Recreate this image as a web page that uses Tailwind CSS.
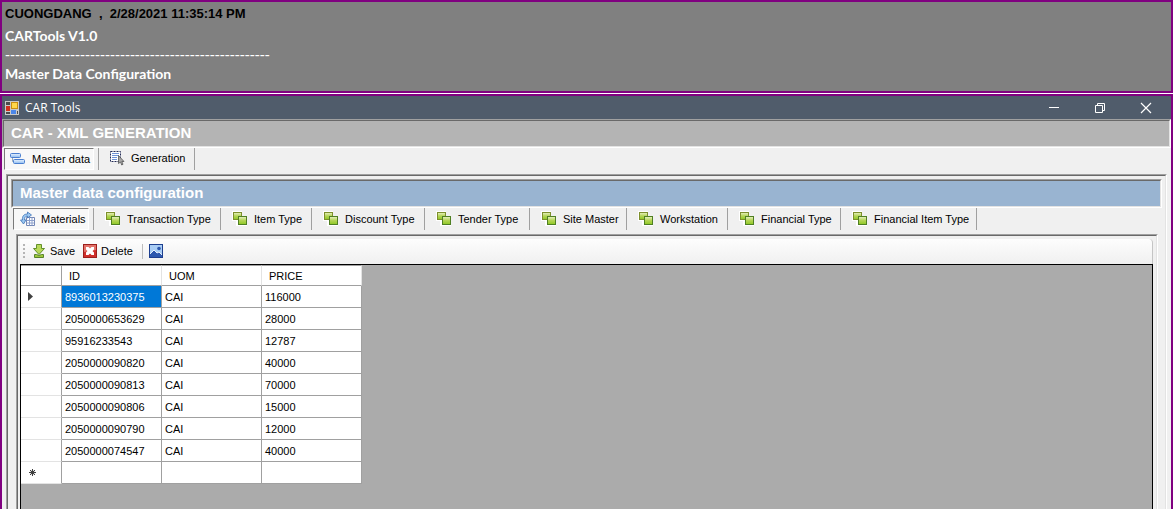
<!DOCTYPE html>
<html lang="en">
<head>
    <meta charset="UTF-8">
    <meta name="viewport" content="width=device-width, initial-scale=1.0">
    <title>CAR Tools</title>
    <script src="https://cdn.jsdelivr.net/npm/@tailwindcss/browser@4"></script>
</head>
<body class="h-screen overflow-hidden flex flex-col gap-px bg-white text-black text-[11px] leading-4 font-['Liberation_Sans',sans-serif]">
    <!-- shared icons -->
    <svg class="absolute size-0">
        <linearGradient id="leaf" x1="0" y1="0" x2="0" y2="1">
            <stop offset="0" stop-color="#e9f2c4"/>
            <stop offset=".5" stop-color="#b4d455"/>
            <stop offset="1" stop-color="#8cc822"/>
        </linearGradient>
        <linearGradient id="sky" x1="0" y1="0" x2="0" y2="1">
            <stop offset="0" stop-color="#eaf4ff"/>
            <stop offset="1" stop-color="#8fbcf0"/>
        </linearGradient>
        <symbol id="blocks" viewBox="0 0 16 16">
            <path d="M0 0h10v5h5v10H4v-5H0z" fill="#fff"/>
            <rect x="1.500" y="1.500" width="8" height="7" fill="url(#leaf)" stroke="#7d8f2c"/>
            <rect x="6.500" y="5.500" width="8" height="8" fill="url(#leaf)" stroke="#4f7f23"/>
        </symbol>
    </svg>

    <header class="shrink-0 border-2 border-[#800080] bg-[#808080] px-[3px] pt-0.5 pb-[7px] text-sm leading-5 text-white font-bold font-['Lato',sans-serif]">
        <p class="text-[13px] text-black whitespace-pre font-['Liberation_Sans',sans-serif]">CUONGDANG  ,  2/28/2021 11:35:14 PM</p>
        <h1 class="pt-0.5">CARTools V1.0</h1>
        <p class="text-[15px] leading-[18px] font-normal font-['Liberation_Sans',sans-serif]">-----------------------------------------------------</p>
        <h2>Master Data Configuration</h2>
    </header>

    <main class="grow min-h-0 flex flex-col border-2 border-b-0 border-[#800080] bg-[#f0f0f0]">
        <!-- title bar -->
        <div class="shrink-0 h-[23px] flex items-center bg-[#505c6b] pl-[3px] pr-0.5 text-white text-xs font-['Open_Sans',sans-serif]">
            <svg class="size-[14px] mr-[6px]" viewBox="0 0 14 14">
                <rect width="14" height="14" fill="#c9c9c9"/>
                <path d="M1 1h4v3H1zM1 11h4v2H1zM12 10h1v3h-1z" fill="#4b4b4b"/>
                <rect x="6.500" y="1.500" width="6" height="6" fill="#ffd84a" stroke="#c98f10"/>
                <rect x="1" y="5" width="4" height="5" fill="#d2301c"/>
                <rect x="6" y="9" width="5" height="4" fill="#4b86e8"/>
            </svg>
            <span class="grow">CAR Tools</span>
            <button class="w-[46px] h-full flex items-center justify-center" aria-label="Minimize">
                <svg class="size-3" viewBox="0 0 12 12"><path d="M1 5.500h10" stroke="#fff"/></svg>
            </button>
            <button class="w-[46px] h-full flex items-center justify-center" aria-label="Restore">
                <svg class="size-3" viewBox="0 0 12 12" fill="none" stroke="#fff"><path d="M1.500 3.500h7v7h-7zM3.500 3V1.500h7v7H9"/></svg>
            </button>
            <button class="w-[46px] h-full flex items-center justify-center" aria-label="Close">
                <svg class="size-3" viewBox="0 0 12 12"><path d="M1 1l10 10M11 1L1 11" stroke="#fff" stroke-width="1.200"/></svg>
            </button>
        </div>

        <div class="shrink-0 border border-t-[#a0a0a0] border-l-[#a0a0a0] border-r-white border-b-white">
            <h2 class="border border-t-[#696969] border-l-[#696969] border-r-[#e3e3e3] border-b-[#e3e3e3] bg-[#b4b4b4] pl-[7px] pb-0.5 text-[15px] leading-[23px] font-bold text-white">CAR - XML GENERATION</h2>
        </div>

        <nav class="shrink-0 h-[22px] flex pl-0.5">
            <button class="w-[90px] flex items-center border border-[#7a7a7a] border-r-white border-b-white bg-[#f8f8f8] pl-[5px] gap-[6px] whitespace-nowrap">
                <svg class="size-4 shrink-0" viewBox="0 0 16 16" fill="url(#sky)" stroke="#4a7fd0">
                    <rect x=".5" y="2.500" width="10" height="4" rx="1"/>
                    <rect x="3.500" y="8.500" width="11" height="4" rx="1"/>
                    <path d="M2.500 7v3.500H3" fill="none" stroke="#9ab"/>
                </svg>
                Master data
            </button>
            <button class="ml-1 w-[97px] flex items-center border-x border-[#a0a0a0] pl-[10px] pb-0.5 gap-[6px] whitespace-nowrap">
                <svg class="size-4 shrink-0" viewBox="0 0 16 16">
                    <rect x="1.500" y="1.500" width="10" height="10" fill="#fff" stroke="#222a55" stroke-dasharray="2 1"/>
                    <path d="M3 3.500h7M3 5.500h7M3 7.500h5M3 9.500h5" stroke="#6f93d6"/>
                    <path d="M9.500 5.500v8l2-1.500 1.200 3 1.300-.7-1.200-2.800h2.200z" fill="#a8a8a8" stroke="#555" stroke-width=".8"/>
                </svg>
                Generation
            </button>
        </nav>

        <!-- master data panel -->
        <section class="grow min-h-0 flex flex-col mt-1 ml-1 mr-1 border border-b-0 border-t-[#a0a0a0] border-l-[#a0a0a0] border-r-white">
            <div class="grow min-h-0 flex flex-col border border-b-0 border-t-[#696969] border-l-[#696969] border-r-[#e3e3e3] p-[3px] pb-0">
                <div class="shrink-0 border border-t-[#a0a0a0] border-l-[#a0a0a0] border-r-white border-b-white">
                    <h2 class="border border-t-[#696969] border-l-[#696969] border-r-[#e3e3e3] border-b-[#e3e3e3] bg-[#99b4d1] pl-[7px] pb-0.5 text-[15px] leading-[23px] font-bold text-white">Master data configuration</h2>
                </div>

                <nav class="shrink-0 h-[22px] flex pl-0.5">
                    <button class="w-[76px] shrink-0 flex items-center border border-[#7a7a7a] border-r-white border-b-white bg-[#f8f8f8] pl-[6px] gap-[5px] whitespace-nowrap">
                        <svg class="size-4 shrink-0" viewBox="0 0 16 16">
                            <path d="M6.500 6.500h8v8h-8z" fill="#fff" stroke="#7286b5"/>
                            <path d="M6.500 9.500h8M6.500 12h8M9.500 6.500v8M12 6.500v8" stroke="#8da0cb"/>
                            <path d="M2.500 9C2 5 4 3 7.500 3V1l4 3-4 3V5C5 5 4.500 7 4.500 9H6l-2.500 4L.5 9z" fill="#9cc8f2" stroke="#3c72b8" stroke-width=".8"/>
                        </svg>
                        Materials
                    </button>
                    <button class="ml-1 w-[128px] shrink-0 flex items-center border-x border-[#a0a0a0] pl-[11px] gap-[6px] whitespace-nowrap"><svg class="size-4 shrink-0"><use href="#blocks"/></svg>Transaction Type</button>
                    <button class="w-[91px] shrink-0 flex items-center border-r border-[#a0a0a0] pl-[11px] gap-[6px] whitespace-nowrap"><svg class="size-4 shrink-0"><use href="#blocks"/></svg>Item Type</button>
                    <button class="w-[113px] shrink-0 flex items-center border-r border-[#a0a0a0] pl-[11px] gap-[6px] whitespace-nowrap"><svg class="size-4 shrink-0"><use href="#blocks"/></svg>Discount Type</button>
                    <button class="w-[105px] shrink-0 flex items-center border-r border-[#a0a0a0] pl-[11px] gap-[6px] whitespace-nowrap"><svg class="size-4 shrink-0"><use href="#blocks"/></svg>Tender Type</button>
                    <button class="w-[97px] shrink-0 flex items-center border-r border-[#a0a0a0] pl-[11px] gap-[6px] whitespace-nowrap"><svg class="size-4 shrink-0"><use href="#blocks"/></svg>Site Master</button>
                    <button class="w-[101px] shrink-0 flex items-center border-r border-[#a0a0a0] pl-[11px] gap-[6px] whitespace-nowrap"><svg class="size-4 shrink-0"><use href="#blocks"/></svg>Workstation</button>
                    <button class="w-[113px] shrink-0 flex items-center border-r border-[#a0a0a0] pl-[11px] gap-[6px] whitespace-nowrap"><svg class="size-4 shrink-0"><use href="#blocks"/></svg>Financial Type</button>
                    <button class="w-[136px] shrink-0 flex items-center border-r border-[#a0a0a0] pl-[11px] gap-[6px] whitespace-nowrap"><svg class="size-4 shrink-0"><use href="#blocks"/></svg>Financial Item Type</button>
                </nav>

                <!-- materials panel -->
                <div class="grow min-h-0 flex flex-col mt-1 ml-[5px] mr-1 border border-b-0 border-t-[#a0a0a0] border-l-[#a0a0a0] border-r-white">
                    <div class="grow min-h-0 flex flex-col border border-b-0 border-t-[#696969] border-l-[#696969] border-r-[#e3e3e3] px-[3px] pt-[3px] pl-0.5">
                        <div class="shrink-0 h-[25px] flex items-center rounded-tr border-r border-[#c4c4c4] bg-linear-to-b from-[#fdfdfd] to-[#f0f0f0] pl-[3px] pb-px">
                            <svg class="w-0.5 h-[15px] mr-1.5" viewBox="0 0 2 15"><path d="M0 0h2v2H0zM0 4h2v2H0zM0 8h2v2H0zM0 12h2v2H0z" fill="#b5b5b5"/></svg>
                            <button class="flex items-center gap-[3px] mr-[7px]">
                                <svg class="size-4" viewBox="0 0 16 16">
                                    <path d="M5.500 1.500h5v4h3L8 11.500 2.500 5.500h3z" fill="#b8d958" stroke="#63902a"/>
                                    <path d="M3.500 11.500h2l2.500 1 2.500-1h2v3h-9z" fill="#9cc83b" stroke="#58832a"/>
                                </svg>
                                Save
                            </button>
                            <button class="flex items-center gap-[3px] mr-[9px]">
                                <svg class="size-4" viewBox="0 0 16 16">
                                    <rect x="1.500" y="1.500" width="13" height="13" fill="#cf2f2b" stroke="#9c1f1c"/>
                                    <path d="M2 2h12v5L2 9z" fill="#e2726a"/>
                                    <path d="M4 4h2.500L8 5.500 9.500 4H12v2.500L10.500 8 12 9.500V12H9.500L8 10.500 6.500 12H4V9.500L5.500 8 4 6.500z" fill="#fff"/>
                                </svg>
                                Delete
                            </button>
                            <span class="w-px h-[15px] bg-[#bdbdbd] mr-[5px]"></span>
                            <button aria-label="Picture">
                                <svg class="size-4" viewBox="0 0 16 16">
                                    <rect x="1.500" y="1.500" width="13" height="13" fill="#a9cdf5" stroke="#1d3f8f"/>
                                    <path d="M2 14v-3l4-4 3 3 2-1 3 3v2z" fill="#2c57ae"/>
                                    <path d="M2 11l4-4 3 3 2-1 3 3" fill="none" stroke="#e8f1fc"/>
                                    <circle cx="11" cy="5.500" r="1.800" fill="#2c57ae"/>
                                </svg>
                            </button>
                        </div>
                        <div class="grow min-h-0 border border-b-0 border-black bg-[#ababab]">
                            <table class="table-fixed w-[341px] border-separate border-spacing-0 bg-white text-left [&_td]:border-r [&_td]:border-b [&_td]:border-[#a0a0a0] [&_td]:pl-[3px] [&_td]:h-[22px] [&_td]:py-0 [&_tbody_th]:border-r [&_tbody_th]:border-r-[#a0a0a0] [&_tbody_th]:border-b [&_tbody_th]:border-b-[#e3e3e3]">
                                <colgroup><col class="w-[41px]"><col class="w-[100px]"><col class="w-[100px]"><col class="w-[100px]"></colgroup>
                                <thead>
                                    <tr class="h-[21px] [&>*]:border-b [&>*]:border-b-[#a0a0a0] [&>*]:border-t [&>*]:border-t-[#a0a0a0]">
                                        <th class="border-r border-r-[#a0a0a0]" aria-label="Row"></th>
                                        <th class="font-normal pl-[7px] border-r border-r-[#e3e3e3]">ID</th>
                                        <th class="font-normal pl-[7px] border-r border-r-[#e3e3e3]">UOM</th>
                                        <th class="font-normal pl-[7px] border-r border-r-[#e3e3e3]">PRICE</th>
                                    </tr>
                                </thead>
                                <tbody>
                                    <tr><th scope="row"><svg class="w-[5px] h-[9px] ml-[7px]" viewBox="0 0 5 9"><path d="M0 0l5 4.500L0 9z" fill="#404040"/></svg></th><td class="bg-[#0078d7] text-white">8936013230375</td><td>CAI</td><td>116000</td></tr>
                                    <tr><th scope="row"></th><td>2050000653629</td><td>CAI</td><td>28000</td></tr>
                                    <tr><th scope="row"></th><td>95916233543</td><td>CAI</td><td>12787</td></tr>
                                    <tr><th scope="row"></th><td>2050000090820</td><td>CAI</td><td>40000</td></tr>
                                    <tr><th scope="row"></th><td>2050000090813</td><td>CAI</td><td>70000</td></tr>
                                    <tr><th scope="row"></th><td>2050000090806</td><td>CAI</td><td>15000</td></tr>
                                    <tr><th scope="row"></th><td>2050000090790</td><td>CAI</td><td>12000</td></tr>
                                    <tr><th scope="row"></th><td>2050000074547</td><td>CAI</td><td>40000</td></tr>
                                    <tr><th scope="row"><svg class="size-[7px] ml-2" viewBox="0 0 7 7"><path d="M3.500 0v7M0 3.500h7M1 1l5 5M6 1L1 6" stroke="#404040"/><circle cx="3.500" cy="3.500" r="2" fill="#404040"/></svg></th><td></td><td></td><td></td></tr>
                                </tbody>
                            </table>
                        </div>
                    </div>
                </div>
            </div>
        </section>
    </main>
</body>
</html>
